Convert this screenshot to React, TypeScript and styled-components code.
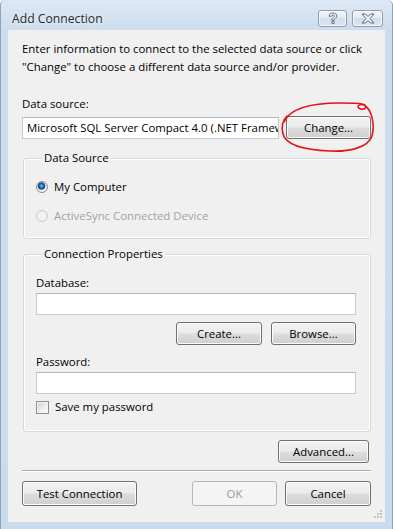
import React from "react";
import styled, { createGlobalStyle } from "styled-components";

const Global = createGlobalStyle`
  html, body { margin: 0; padding: 0; background: #ffffff; }
  body { font-family: "Open Sans", "Noto Sans", sans-serif; font-size: 11.4px; color: #000; }
  * { box-sizing: border-box; }
`;

const Window = styled.div`
  position: relative;
  width: 393px;
  height: 529px;
  display: flex;
  flex-direction: column;
  background: linear-gradient(to bottom, #dde8f5 0px, #cddded 30px, #cadbee 100%);
  border-left: 1px solid #8fa3b9;
  border-right: 1px solid #8fa3b9;
  border-radius: 5px 5px 0 0;
  overflow: hidden;
`;

const TitleBar = styled.div`
  flex: none;
  height: 30px;
  display: flex;
  align-items: center;
  padding: 6px 9px 0 11px;
`;

const Title = styled.div`
  flex: 1;
  font-size: 12.2px;
  color: #2b2b2b;
  text-shadow: 0 0 6px rgba(255, 255, 255, 0.9);
`;

const CaptionButtons = styled.div`
  display: flex;
  gap: 5px;
`;

const CaptionButton = styled.div<{ $w: number }>`
  width: ${(p) => p.$w}px;
  height: 17px;
  border: 1px solid #8d9cae;
  border-radius: 3px;
  background: linear-gradient(to bottom, #f1f5fa 0%, #e2eaf4 45%, #d3deeb 50%, #dbe5f1 100%);
  box-shadow: inset 0 0 0 1px rgba(255, 255, 255, 0.7);
  display: flex;
  align-items: center;
  justify-content: center;
`;

const Client = styled.div`
  flex: 1;
  margin: 0 7px;
  background: #f0f0f0;
  display: flex;
  flex-direction: column;
  padding: 0 14px 0 14px;
  position: relative;
`;

const BottomFrame = styled.div`
  flex: none;
  height: 7px;
`;

const Intro = styled.p`
  margin: 10px 0 0 0;
  line-height: 18px;
  white-space: nowrap;
`;

const Label = styled.div<{ $mt: number }>`
  margin-top: ${(p) => p.$mt}px;
  line-height: 16px;
  height: 16px;
`;

const DataRow = styled.div`
  margin-top: 4px;
  display: flex;
  align-items: center;
  justify-content: space-between;
`;

const TextBox = styled.div<{ $w?: number; $mt?: number }>`
  width: ${(p) => (p.$w ? `${p.$w}px` : "100%")};
  margin-top: ${(p) => p.$mt ?? 0}px;
  height: 22px;
  background: #ffffff;
  border: 1px solid #c6cacf;
  border-top-color: #b4b8be;
  padding: 0 4px;
  line-height: 20px;
  white-space: nowrap;
  overflow: hidden;
`;

const Button = styled.button<{ $w: number; $h?: number }>`
  width: ${(p) => p.$w}px;
  height: ${(p) => p.$h ?? 23}px;
  flex: none;
  font-family: inherit;
  font-size: 11.4px;
  color: #000;
  padding: 0;
  border: 1px solid #707070;
  border-radius: 3px;
  background: linear-gradient(to bottom, #f2f2f2 0%, #ebebeb 48%, #dddddd 52%, #cfcfcf 100%);
  box-shadow: inset 0 0 0 1px #fbfbfb;
  &:disabled {
    border-color: #b5b8bb;
    background: #f4f4f4;
    box-shadow: none;
    color: #9a9a9a;
  }
`;

const Group = styled.fieldset<{ $mt: number; $pt: number; $pb: number }>`
  margin: ${(p) => p.$mt}px 0 0 1px;
  min-inline-size: 0;
  border: 1px solid #d3d9de;
  border-radius: 3px;
  box-shadow: inset 0 0 0 1px #ffffff;
  padding: ${(p) => p.$pt}px 14px ${(p) => p.$pb}px 12px;
  display: flex;
  flex-direction: column;
`;

const Legend = styled.legend`
  margin-left: 6px;
  padding: 0 2px;
  line-height: 16px;
  background: #f0f0f0;
`;

const OptionRow = styled.label<{ $mt?: number; $disabled?: boolean }>`
  margin-top: ${(p) => p.$mt ?? 0}px;
  display: flex;
  align-items: center;
  gap: 6px;
  height: 16px;
  line-height: 16px;
  color: ${(p) => (p.$disabled ? "#a3a3a3" : "#000")};
`;

const RadioDot = styled.span<{ $checked?: boolean; $disabled?: boolean }>`
  width: 12px;
  height: 12px;
  flex: none;
  border-radius: 50%;
  border: 1px solid ${(p) => (p.$disabled ? "#c9c9c9" : "#8b8f94")};
  background: ${(p) =>
    p.$disabled
      ? "radial-gradient(circle, #f4f4f4 0, #ebebeb 100%)"
      : p.$checked
      ? "radial-gradient(circle at 45% 40%, #7cc5f3 0, #2a76c2 1.8px, #103f7c 3.2px, #9ab2c9 3.8px, #f4f4f4 4.4px, #d9d9d9 100%)"
      : "radial-gradient(circle, #f4f4f4 0, #d9d9d9 100%)"};
`;

const CheckBox = styled.span`
  width: 13px;
  height: 13px;
  flex: none;
  border: 1px solid #8e8f8f;
  background: linear-gradient(135deg, #cfd1d4 0%, #eeeeee 60%, #fbfbfb 100%);
  box-shadow: inset 0 0 0 1px #f4f4f4;
`;

const ButtonPair = styled.div`
  margin-top: 7px;
  display: flex;
  justify-content: flex-end;
  gap: 9px;
`;

const AdvancedRow = styled.div`
  margin-top: 8px;
  display: flex;
  justify-content: flex-end;
  padding-right: 2px;
`;

const Separator = styled.div`
  margin-top: 7px;
  height: 2px;
  border-top: 1px solid #a8a8a8;
  border-bottom: 1px solid #ffffff;
`;

const FooterRow = styled.div`
  margin-top: 9px;
  display: flex;
  align-items: center;
  gap: 8px;
`;

const Spacer = styled.div`
  flex: 1;
`;

const Grip = styled.svg`
  position: absolute;
  right: 2px;
  bottom: 3px;
`;

const Annotation = styled.svg`
  position: absolute;
  left: -1px;
  top: 0;
  pointer-events: none;
`;

function HelpGlyph() {
  return (
    <svg width="12" height="13" viewBox="0 0 12 13">
      <path
        d="M2.2 4.3 C2.2 1.9 4 1 6 1 C8.2 1 9.8 2.2 9.8 4 C9.8 5.6 8.6 6.3 7.6 6.9 C7.2 7.2 7.1 7.5 7.1 8.2 H4.9 C4.9 7 5.2 6.3 6.2 5.7 C7.1 5.1 7.5 4.8 7.5 4.1 C7.5 3.4 6.9 3 6 3 C5 3 4.5 3.5 4.5 4.3 Z M4.9 9.2 H7.1 V11.6 H4.9 Z"
        fill="#f6f8fb"
        stroke="#5a6473"
        strokeWidth="0.9"
        strokeLinejoin="round"
      />
    </svg>
  );
}

function CloseGlyph() {
  return (
    <svg width="16" height="11" viewBox="0 0 16 11">
      <path
        d="M2 1 H5.5 L8 3.6 L10.5 1 H14 L10 5.5 L14 10 H10.5 L8 7.4 L5.5 10 H2 L6 5.5 Z"
        fill="#f4f6f9"
        stroke="#5a6473"
        strokeWidth="1"
        strokeLinejoin="round"
      />
    </svg>
  );
}

export default function App() {
  return (
    <>
      <Global />
      <Window>
        <TitleBar>
          <Title>Add Connection</Title>
          <CaptionButtons>
            <CaptionButton $w={29}>
              <HelpGlyph />
            </CaptionButton>
            <CaptionButton $w={31}>
              <CloseGlyph />
            </CaptionButton>
          </CaptionButtons>
        </TitleBar>
        <Client>
          <Intro>
            Enter information to connect to the selected data source or click
            <br />
            "Change" to choose a different data source and/or provider.
          </Intro>
          <Label $mt={20}>Data source:</Label>
          <DataRow>
            <TextBox $w={257}>
              Microsoft SQL Server Compact 4.0 (.NET Framework Data Provider for Microsoft SQL Server Compact 4.0)
            </TextBox>
            <Button $w={85}>Change...</Button>
          </DataRow>
          <Group $mt={11} $pt={13} $pb={14}>
            <Legend>Data Source</Legend>
            <OptionRow>
              <RadioDot $checked />
              My Computer
            </OptionRow>
            <OptionRow $mt={13} $disabled>
              <RadioDot $disabled />
              ActiveSync Connected Device
            </OptionRow>
          </Group>
          <Group $mt={7} $pt={13} $pb={16}>
            <Legend>Connection Properties</Legend>
            <Label $mt={0}>Database:</Label>
            <TextBox $mt={2} />
            <ButtonPair>
              <Button $w={86}>Create...</Button>
              <Button $w={85}>Browse...</Button>
            </ButtonPair>
            <Label $mt={9}>Password:</Label>
            <TextBox $mt={2} />
            <OptionRow $mt={5}>
              <CheckBox />
              Save my password
            </OptionRow>
          </Group>
          <AdvancedRow>
            <Button $w={91}>Advanced...</Button>
          </AdvancedRow>
          <Separator />
          <FooterRow>
            <Button $w={115} $h={25}>Test Connection</Button>
            <Spacer />
            <Button $w={85} $h={25} disabled>
              OK
            </Button>
            <Button $w={86} $h={25}>Cancel</Button>
          </FooterRow>
          <Grip width="10" height="10" viewBox="0 0 10 10">
            <rect x="7" y="1" width="2" height="2" fill="#c5c5c5" />
            <rect x="4" y="4" width="2" height="2" fill="#c5c5c5" />
            <rect x="7" y="4" width="2" height="2" fill="#c5c5c5" />
            <rect x="1" y="7" width="2" height="2" fill="#c5c5c5" />
            <rect x="4" y="7" width="2" height="2" fill="#c5c5c5" />
            <rect x="7" y="7" width="2" height="2" fill="#c5c5c5" />
          </Grip>
        </Client>
        <BottomFrame />
        <Annotation width="393" height="529" viewBox="0 0 393 529">
          <path
            d="M284 122 C290 108 312 103 340 103 C350 103 358 103 362 104 C368 105 366 110 361 109 C356 108 358 103 364 105 C372 110 375 124 372 136 C368 148 348 152 330 151 C305 150 286 146 283 134 C281 126 283 120 287 116"
            fill="none"
            stroke="#e3141b"
            strokeWidth="1.6"
            strokeLinecap="round"
          />
        </Annotation>
      </Window>
    </>
  );
}
